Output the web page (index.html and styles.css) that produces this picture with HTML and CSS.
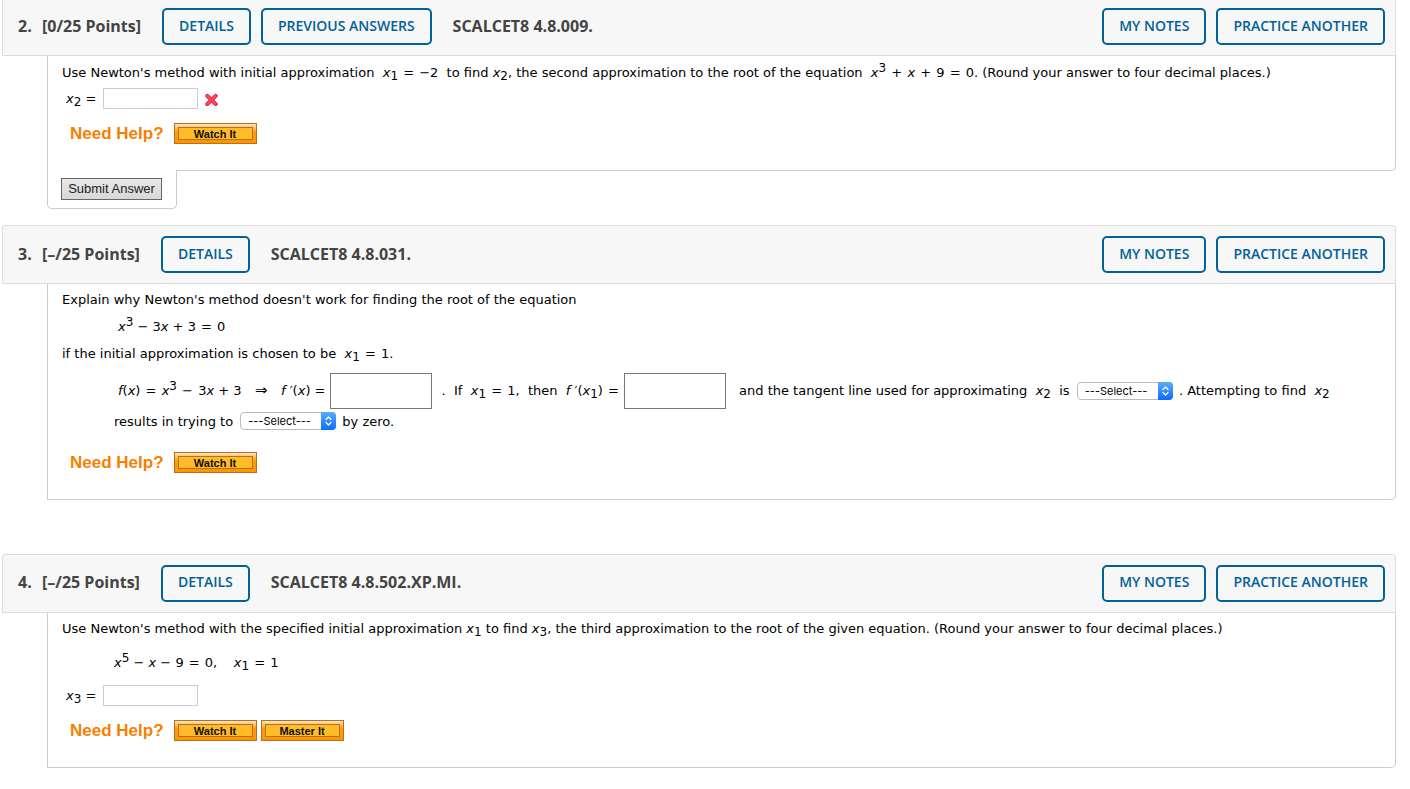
FILE: index.html
```
<!DOCTYPE html>
<html lang="en">
<head>
<meta charset="utf-8">
<title>Newton's Method</title>
<link rel="stylesheet" href="styles.css">
</head>
<body>
<main class="assignment">
  <section class="question">
    <header class="bar bar-cut">
      <span class="number">2.</span><span class="points">[0/25 Points]</span>
      <button class="pill" type="button">DETAILS</button>
      <button class="pill" type="button">PREVIOUS ANSWERS</button>
      <h2 class="code">SCALCET8 4.8.009.</h2>
      <div class="actions">
        <button class="pill" type="button">MY NOTES</button>
        <button class="pill" type="button">PRACTICE ANOTHER</button>
      </div>
    </header>
    <div class="content open">
      <p class="line">Use Newton's method with initial approximation &nbsp;<i>x</i><sub>1</sub> <span class="op">=</span> −2 &nbsp;to find <i>x</i><sub>2</sub>, the second approximation to the root of the equation &nbsp;<i>x</i><sup>3</sup> <span class="op">+</span> <i>x</i> <span class="op">+</span> 9 <span class="op">=</span> 0. (Round your answer to four decimal places.)</p>
      <div class="answer">
        <label for="q2"><i>x</i><sub>2</sub> =</label>
        <input id="q2" class="field" type="text">
        <svg class="wrong" width="14" height="14" viewBox="0 0 14 14" role="img" aria-label="Incorrect"><path d="M2.3 3.8 10.7 12.2M10.7 3.8 2.3 12.2" stroke="#e8203c" stroke-width="4" stroke-linecap="round"/><path d="M2.3 3.8 10.7 12.2M10.7 3.8 2.3 12.2" stroke="#ff4a5e" stroke-width="2" stroke-linecap="round"/></svg>
      </div>
      <div class="help"><span class="help-title">Need Help?</span><button class="gold" type="button">Watch It</button></div>
    </div>
    <div class="submit-tab"><button class="submit" type="button">Submit Answer</button></div>
  </section>

  <section class="question">
    <header class="bar">
      <span class="number">3.</span><span class="points">[–/25 Points]</span>
      <button class="pill" type="button">DETAILS</button>
      <h2 class="code">SCALCET8 4.8.031.</h2>
      <div class="actions">
        <button class="pill" type="button">MY NOTES</button>
        <button class="pill" type="button">PRACTICE ANOTHER</button>
      </div>
    </header>
    <div class="content">
      <p class="line">Explain why Newton's method doesn't work for finding the root of the equation</p>
      <p class="line equation"><i>x</i><sup>3</sup> − 3<i>x</i> + 3 <span class="op">=</span> 0</p>
      <p class="line">if the initial approximation is chosen to be &nbsp;<i>x</i><sub>1</sub> <span class="op">=</span> 1.</p>
      <div class="steps">
        <p class="step first"><i>f</i>(<i>x</i>) <span class="op">=</span> <i>x</i><sup>3</sup> <span class="op">−</span> 3<i>x</i> + 3 &nbsp; <span class="arrow">⇒</span> &nbsp; <i>f</i> ′(<i>x</i>) = <input class="mathbox" type="text" aria-label="f prime of x"><span class="after">. &nbsp;If &nbsp;<i>x</i><sub>1</sub> <span class="op">=</span> 1, &nbsp;then &nbsp;<i>f</i> ′(<i>x</i><sub>1</sub>) <span class="op">=</span> </span><input class="mathbox" type="text" aria-label="f prime of x1"><span class="after wide">and the tangent line used for approximating &nbsp;<i>x</i><sub>2</sub> &nbsp;is</span>
          <span class="dropdown"><select aria-label="Tangent line"><option>---Select---</option></select><svg width="15" height="18" viewBox="0 0 15 18" aria-hidden="true"><path d="M5 7.5 7.5 5 10 7.5M5 10.5 7.5 13 10 10.5" fill="none" stroke="#fff" stroke-width="1.3" stroke-linecap="round" stroke-linejoin="round"/></svg></span>
          . Attempting to find &nbsp;<i>x</i><sub>2</sub></p>
        <p class="step">results in trying to
          <span class="dropdown"><select aria-label="Operation"><option>---Select---</option></select><svg width="15" height="18" viewBox="0 0 15 18" aria-hidden="true"><path d="M5 7.5 7.5 5 10 7.5M5 10.5 7.5 13 10 10.5" fill="none" stroke="#fff" stroke-width="1.3" stroke-linecap="round" stroke-linejoin="round"/></svg></span>
          by zero.</p>
      </div>
      <div class="help"><span class="help-title">Need Help?</span><button class="gold" type="button">Watch It</button></div>
    </div>
  </section>

  <section class="question spaced">
    <header class="bar">
      <span class="number">4.</span><span class="points">[–/25 Points]</span>
      <button class="pill" type="button">DETAILS</button>
      <h2 class="code">SCALCET8 4.8.502.XP.MI.</h2>
      <div class="actions">
        <button class="pill" type="button">MY NOTES</button>
        <button class="pill" type="button">PRACTICE ANOTHER</button>
      </div>
    </header>
    <div class="content">
      <p class="line">Use Newton's method with the specified initial approximation <i>x</i><sub>1</sub> to find <i>x</i><sub>3</sub>, the third approximation to the root of the given equation. (Round your answer to four decimal places.)</p>
      <p class="line given"><i>x</i><sup>5</sup> − <i>x</i> − 9 <span class="op">=</span> 0, &nbsp; &nbsp;<i>x</i><sub>1</sub> <span class="op">=</span> 1</p>
      <div class="answer">
        <label for="q4"><i>x</i><sub>3</sub> =</label>
        <input id="q4" class="field" type="text">
      </div>
      <div class="help"><span class="help-title">Need Help?</span><button class="gold" type="button">Watch It</button><button class="gold" type="button">Master It</button></div>
    </div>
  </section>
</main>
</body>
</html>
```
FILE: styles.css
```
* { box-sizing: border-box; }
body {
  margin: 0;
  background: #fff;
  color: #000;
  font-family: Verdana, "DejaVu Sans", sans-serif;
  font-size: 13px;
}
p, h2 { margin: 0; }
sub, sup { font-size: 12px; line-height: 0; }
sub { vertical-align: -3px; }
sup { vertical-align: 5px; }
.op { margin: 0 1px; }

.assignment { padding: 0 14px 21px 2px; }
.question + .question { margin-top: 16px; }
.question + .spaced { margin-top: 54px; }

.bar {
  display: flex;
  align-items: center;
  padding: 10px 10px 10px 15px;
  border: 1px solid #ddd;
  border-radius: 3px 3px 0 0;
  background: #f7f7f7;
  color: #444;
  font: bold 16px/22px "Open Sans", sans-serif;
}
.bar-cut { padding-top: 8px; border-top: 0; border-radius: 0; }
.number, .points, .code { padding-bottom: 2px; }
.number { width: 24px; }
.points { margin-right: 21px; }
.code { margin-left: 11px; font: inherit; }
.actions { display: flex; gap: 10px; margin-left: auto; }
.pill {
  height: 37px;
  padding: 0 15px 2px;
  border: 2px solid #006298;
  border-radius: 5px;
  background: transparent;
  color: #006298;
  font: 600 14px/20px "Open Sans", sans-serif;
}
.bar > .pill { margin-right: 10px; }

.content {
  margin-left: 45px;
  padding: 2px 15px 26px 14px;
  border: 1px solid #ccc;
  border-top: 0;
  border-radius: 0 0 5px 0;
}
.open { padding-top: 3px; }
.line { line-height: 27px; }
.equation { padding-left: 56px; }
.given { padding: 7px 0 7px 52px; }

.answer {
  display: flex;
  align-items: center;
  gap: 7px;
  margin-top: 2px;
  padding-left: 4px;
}
.field { width: 95px; height: 21px; padding: 1px 4px; border: 1px solid #ccc; background: #fff; }

.steps { padding: 7px 0 4px 52px; }
.step { line-height: 25px; }
.first { padding-left: 4px; line-height: 34px; }
.mathbox { width: 102px; height: 36px; margin-top: -2px; padding: 4px; border: 1px solid #777; vertical-align: middle; }
.arrow { margin: 0 1px; font-size: 15px; line-height: 0; }
.after { margin-left: 10px; }
.wide { margin-left: 13px; }
.dropdown {
  display: inline-block;
  position: relative;
  width: 96px;
  height: 18px;
  margin: 0 2px 2px 3px;
  vertical-align: middle;
  line-height: 18px;
}
.dropdown select {
  display: block;
  width: 96px;
  height: 18px;
  padding: 0 16px 0 7px;
  border: 1px solid #bbb;
  border-radius: 4px;
  background: #fff;
  color: #000;
  appearance: none;
  font: 11px/16px Inter, sans-serif;
}
.dropdown svg {
  position: absolute;
  top: 0;
  right: 0;
  border-radius: 0 4px 4px 0;
  background: linear-gradient(#5aacfb, #0a6cff);
  pointer-events: none;
}

.help { display: flex; align-items: center; gap: 4px; margin-top: 14px; padding-left: 8px; }
.help-title { margin-right: 6px; color: #f77f00; font: bold 17px/21px "Liberation Sans", Arial, sans-serif; }
.gold {
  width: 83px;
  height: 21px;
  padding: 1px 0 0;
  border: 1px solid #b5711b;
  background: linear-gradient(#ffbb28, #ffbb28) 4px 3px / 73px 13px no-repeat, linear-gradient(#ffe5c3, #ff9b0b 40%, #ff9400);
  outline: 1px solid #b5711b;
  outline-offset: -5px;
  color: #111;
  font: bold 11px/18px "Liberation Sans", Arial, sans-serif;
}

.submit-tab {
  position: relative;
  width: 130px;
  margin: -1px 0 0 45px;
  padding: 8px 14px 8px 13px;
  border: 1px solid #ccc;
  border-top: 0;
  border-radius: 0 0 5px 5px;
  background: #fff;
}
.submit {
  display: block;
  width: 101px;
  height: 22px;
  padding: 0;
  border: 1px solid #666;
  background: linear-gradient(#e8e8e8, #d8d8d8);
  color: #222;
  font: 13px/20px "Liberation Sans", Arial, sans-serif;
}
```
